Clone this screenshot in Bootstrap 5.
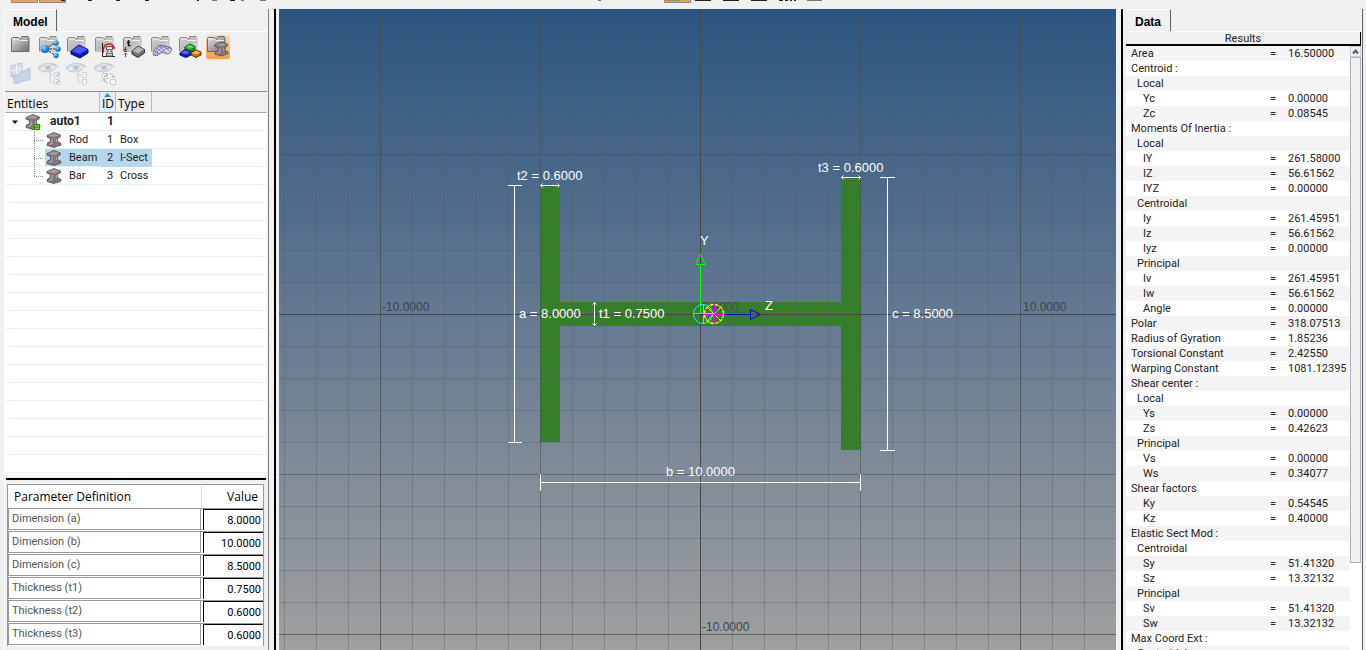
<!DOCTYPE html>
<html lang="en">
<head>
<meta charset="utf-8">
<meta name="viewport" content="width=device-width, initial-scale=1">
<title>Section properties</title>
<link href="https://cdn.jsdelivr.net/npm/bootstrap@5.3.0/dist/css/bootstrap.min.css" rel="stylesheet">
<style>
body{background:#f0f0f0;color:#222;font:11px/15px "Roboto","Liberation Sans",sans-serif}
.strip{height:9px}
.strip svg{display:block}
.side-l{width:279px;padding:0 3px 0 4px}
.side-l-in{width:266px;border-right:1px solid #808080;border-left:1px solid #fff}
.rule-l{border-right:2px solid #000;width:7px}
.side-r{width:250px;padding-left:5px}
.side-r-in{border-left:2px solid #000;border-right:1px solid #606060;margin-right:3px;padding:0 1px 0 3px}
.tabx{font:bold 12px/20px "Liberation Sans",sans-serif;color:#000;background:#f0f0f0;border:0;border-top:1px solid #fff;border-right:1px solid #606060;padding:2px 8px 0 8px;height:22px;display:block}
.tabx.wide{padding:2px 9px 0 9px}
.topline{border-top:1px solid #fff}
.tools{padding:3px 30px 5px 5px;gap:3px 4px}
.tools button{width:24px;height:24px;padding:0;border:0;background:none;display:block}
.tools button.on{background:linear-gradient(#f6dcc0,#f0a040);border-radius:2px}
.tools svg{display:block}
.tree{border-top:1px solid #8c8c8c;background:#fff repeating-linear-gradient(#fff 0 17px,#e4f3f8 17px 18px) 0 21px;margin-right:1px}
.tree table{border-collapse:separate;border-spacing:0;table-layout:fixed;width:100%}
.tree th{font:12px/20px "Open Sans",sans-serif;color:#000;background:#f0f0f0;height:21px;padding:0 0 0 2px;border-right:1px solid #b4c0c8;border-bottom:1px solid #a0acb4;white-space:nowrap;position:relative}
.tree th>span{position:relative;top:2px}
.tree th:last-child{border-right:0}
.tree th.sorted{background:#dceef8}
.tree th.sorted svg{position:absolute;left:4px;top:1px}
.tree td{height:18px;padding:0 0 1px;line-height:17px;white-space:nowrap}
.tree .fw-bold{font-size:12px}
.tree td.idc{padding-left:7px}
.tree td.tyc{padding-left:4px}
.tree .kid{padding-left:40px}
.tree .kid>div{height:17px;padding-left:1px}
.tree .sel>div,.tree .selc{background:#b5d7ea}
.guide{position:absolute;left:28px;top:39px}
.split{height:2px;background:#000;margin:1px 2px 4px 1px}
.params{margin:0 4px 4px 2px;border:1px solid #999;border-bottom:0;background:#fff}
.params table{width:100%;border-collapse:separate;border-spacing:0 1px}
.params thead th{font:12px/20px "Open Sans",sans-serif;color:#000;height:21px;padding:1px 6px 0}
.params thead th+th{text-align:right;border-left:1px solid #ddd;padding-right:5px}
.params tbody th{font-weight:400;color:#555;height:22px;border:1px solid #999;padding:0 3px;line-height:20px}
.params tbody td{padding:0 0 0 2px;height:22px;border-top:1px solid #999}
.params input{width:100%;height:21px;border:0;border-top:1px solid #000;border-left:1px solid #000;background:#fff;text-align:right;color:#000;padding:0 2px;border-radius:0;display:block}
.view{background:linear-gradient(#2b5580,#667a92 49%,#9fa09f)}
.view svg{display:block;width:100%;height:100%}
.resh{height:14px;line-height:14px;border-bottom:2px solid #000;border-right:1px solid #000}
.res{width:100%;border-collapse:collapse;table-layout:fixed}
.res td,.res th{height:15px;padding:0;line-height:15px;font-weight:400;white-space:nowrap}
.res th{padding-left:5px}
.res .l1{padding-left:11px}
.res .l2{padding-left:17px}
.res tr:nth-child(odd){background:#f4f4f4}
.res tr:nth-child(even){background:#fff}
.sbar{width:11px;background:#fff}
.sbtn{height:11px;border:1px solid #c8d2da;background:#f0f0f0;padding:0;line-height:0}
.thumb{height:506px;border:1px solid #a9b6c2;background:#f0f0f0}
</style>
</head>
<body class="vh-100 overflow-hidden d-flex flex-column">
<svg width="0" height="0" class="position-absolute">
<defs>
<linearGradient id="fg" x1="0" y1="0" x2="1" y2="1"><stop offset="0" stop-color="#e8e8e8"/><stop offset=".5" stop-color="#a8a8a8"/><stop offset="1" stop-color="#6c6c6c"/></linearGradient>
<linearGradient id="fg2" x1="0" y1="0" x2="1" y2="1"><stop offset="0" stop-color="#d4d4d4"/><stop offset=".5" stop-color="#bcbcbc"/><stop offset="1" stop-color="#e8e8e8"/></linearGradient>
<radialGradient id="bl" cx=".35" cy=".3" r=".8"><stop offset="0" stop-color="#9fe0ff"/><stop offset=".5" stop-color="#2890e0"/><stop offset="1" stop-color="#0850a0"/></radialGradient>
<symbol id="folder" viewBox="0 0 24 24"><path d="M1.500 16.500V3.500L2.500 2.500H8.500L10.500 4.500L12 1.500H18L19 3V16.500Z" fill="url(#fg)" stroke="#6a6a6a"/><path d="M2.500 4H8l2 1.500H18" fill="none" stroke="#eee"/></symbol>
<symbol id="folder2" viewBox="0 0 24 24"><path d="M1.500 16.500V3.500L2.500 2.500H8.500L10.500 4.500L12 1.500H18L19 3V16.500Z" fill="url(#fg2)" stroke="#c0c0c0"/><path d="M1.500 16V3.500L2.500 2.500H8.500L10.500 4.500L12 1.500H18" fill="none" stroke="#888"/><path d="M2.500 4H8l2 1.500H18" fill="none" stroke="#f4f4f4"/></symbol>
<symbol id="beam" viewBox="0 0 16 16"><path d="M1 3.500L8 .5L14.500 3L14 5L11.500 6.500V9.500L15 11.500V13L8 15.500L1 13.500L1.500 11L4.500 9.500V6.500L1 5Z" fill="#81787a" stroke="#514a4c" stroke-width=".8"/><path d="M2 3.700L8 1.300L13.500 3.200L8 5Z" fill="#a59c9e"/><path d="M6 7V11.500L3 12.500M10.500 7V10" fill="none" stroke="#b8b0b2"/></symbol>
<symbol id="eye" viewBox="0 0 24 24"><path d="M0 6.500C4 0 16 0 20 5C15 2 6 3 0 6.500C5 11 13 11 17 6" fill="none" stroke="#c9d0d8" stroke-width="1.300"/><circle cx="10" cy="6" r="3.500" fill="#ccd8e6"/><circle cx="10" cy="5.500" r="1.500" fill="#b0b8c4"/></symbol>
</defs>
</svg>

<div class="strip flex-shrink-0 overflow-hidden">
<svg width="1366" height="9" aria-hidden="true"><g fill="#eba24c" stroke="#888"><path d="M11.500 -2V2.500H37.500V-2ZM39.500 -2V2.500H65.500V-2ZM664.500 -2V2.500H690.500V-2Z"/></g><path d="M61 0h4v1h-4zM88 0h4v1h-4zM116 0h4v1h-4zM145 0h4v1h-4zM197 0h2v1h-2zM230 0h5v1h-5zM695 0h16v1h-16zM723 0h16v1h-16zM751 0h16v1h-16zM779 0h4v1h-4zM785 0h3v1h-3zM790 0h2v1h-2zM794 0h2v1h-2z" fill="#222"/><path d="M212 0h5v1h-5zM241 0h3v1h-3zM260 0h6v1h-6zM598 0h3v1h-3zM807 0h15v1h-15z" fill="#777"/><path d="M667 0h12v1h-12z" fill="#986"/></svg>
</div>

<main class="d-flex flex-fill overflow-hidden">
<aside class="side-l d-flex flex-shrink-0">
<div class="side-l-in d-flex flex-column">
<div class="d-flex"><button class="tabx" type="button">Model</button></div>
<div class="topline"></div>
<nav class="tools d-flex flex-wrap" aria-label="Entity tools">
<button type="button" aria-label="Component"><svg width="24" height="24"><use href="#folder"/></svg></button>
<button type="button" aria-label="Connectors"><svg width="24" height="24"><use href="#folder2"/><path d="M7 14L17 8M7 14H18M7 14L17 20" stroke="#333" stroke-dasharray="3 1"/><circle cx="7" cy="14" r="4" fill="url(#bl)"/><circle cx="18" cy="8" r="2.700" fill="url(#bl)"/><circle cx="20" cy="14" r="2.700" fill="url(#bl)"/><circle cx="18" cy="20.500" r="2.700" fill="url(#bl)"/></svg></button>
<button type="button" aria-label="Material"><svg width="24" height="24"><use href="#folder2"/><path d="M5 16L13 10L22 14.500V18L14 23L5 19Z" fill="#1414b4" stroke="#080870"/><path d="M5.500 16L13 10.500L21.500 14.500L14 19Z" fill="#4a58f4"/></svg></button>
<button type="button" aria-label="Curve"><svg width="24" height="24"><use href="#folder2"/><path d="M8.500 8V21.500H21" fill="none" stroke="#222"/><path d="M9 18C9 11 11 9 15 9S20 11 20.500 14" fill="none" stroke="#e01010" stroke-width="1.600"/><path d="M12.500 11.500h6v3l-2 1.500l2 2v3h-6v-3l2-2l-2-1.500Z" fill="#ddd" stroke="#555"/><path d="M13 14.500h5M13 18.500h5" stroke="#777"/></svg></button>
<button type="button" aria-label="Thickness"><svg width="24" height="24"><use href="#folder2"/><path d="M6.500 5V10.500H8.500M5 7.500H8" fill="none" stroke="#111" stroke-width="1.300"/><path d="M3.500 12V15M2 14L3.500 15.500L5 14M2 16.500H5M3.500 22V18.500M2 19.500L3.500 18L5 19.500" fill="none" stroke="#b01818"/><path d="M10 16L16 11L22.500 14.500V18L16 22.500L10 19Z" fill="#707070" stroke="#333"/><path d="M10.500 16L16 11.500L22 14.500L16 18.500Z" fill="#b8b8b8"/></svg></button>
<button type="button" aria-label="Mesh"><svg width="24" height="24"><use href="#folder2"/><path d="M3 20C4 13 7 10 13 10.500L21 12.500C23 15 20 19 17 19L13 17.500C9 18 8 22 3 20Z" fill="#dcdcf0" stroke="#7070b0"/><path d="M4.500 16L10 19M6 13L13 17.500M9 11L17 18.500M13 10.500L20 16.500M17 11.500L22 14M7 21C7 15 10 12 17 11.500M5 20C5 14 9 11 13 11M11 18C13 14 17 13 21 13" fill="none" stroke="#6868a8" stroke-width=".8"/></svg></button>
<button type="button" aria-label="Assembly"><svg width="24" height="24"><use href="#folder2"/><path d="M7 12L12 9L17 11.500V15L12 17.500L7 15Z" fill="#189018" stroke="#075007"/><path d="M7.500 12L12 9.500L16.500 12L12 14Z" fill="#50e050"/><path d="M2 18L7 14.500L13 17V20L8 22.500L2 20Z" fill="#1818b0" stroke="#080860"/><path d="M2.500 18L7 15L12.500 17.500L8 19.500Z" fill="#5060f4"/><path d="M13 18L18 15L23 17V20L18 22.500L13 20Z" fill="#c07010" stroke="#603000"/><path d="M13.500 18L18 15.500L22.500 17.500L18 19.500Z" fill="#ffb850"/></svg></button>
<button type="button" class="on" aria-label="Beam section"><svg width="24" height="24"><use href="#folder"/><use href="#beam" x="8" y="6" width="15" height="16"/></svg></button>
<button type="button" aria-label="Blocks" disabled><svg width="24" height="24"><path d="M1 4L12 1V11L1 15Z" fill="#d8dce6" stroke="#c0c4d0"/><path d="M6.500 2.500V13M1 9.500L12 6" stroke="#f4f4f8"/><path d="M3 13C8 15 13 8 20 6V18C14 17 9 23 4 21Z" fill="#c6d2e6" stroke="#b8c4da"/></svg></button>
<button type="button" aria-label="Show all" disabled><svg width="24" height="24"><use href="#eye"/><path d="M12 10V20H15M12 13H15" fill="none" stroke="#ccc"/><path d="M16.500 10.500h5v5h-5zM16.500 17.500h5v5h-5z" fill="#f4f8ff" stroke="#d0d0d0"/><path d="M18 13l1 1l2-3M18 20l1 1l2-3" fill="none" stroke="#88a0d8"/></svg></button>
<button type="button" aria-label="Hide all" disabled><svg width="24" height="24"><use href="#eye"/><path d="M12 10V20H15M12 13H15" fill="none" stroke="#ccc"/><path d="M16.500 10.500h4v5h-4zM16.500 17.500h4v5h-4z" fill="#f4f4f4" stroke="#d0d0d0"/></svg></button>
<button type="button" aria-label="Reverse" disabled><svg width="24" height="24"><use href="#eye"/><path d="M8.500 11.500h5v5h-5zM16.500 17.500h5v5h-5z" fill="#f4f8ff" stroke="#ccc"/><path d="M10 14l1 1l2-3" fill="none" stroke="#88a0d8"/><path d="M15.500 11.500q4 0 4 4M18 14l1.500 2l1.500-2M14 21q-4 0-4-3M8.500 19l1.500-2l1.500 2" fill="none" stroke="#bbb"/></svg></button>
</nav>
<div class="tree position-relative flex-fill">
<table>
<colgroup><col style="width:95px"><col style="width:16px"><col style="width:36px"><col></colgroup>
<thead><tr><th><span>Entities</span></th><th class="sorted"><svg width="7" height="4"><path d="M0 4L3.500 0L7 4Z" fill="#4a86a8"/></svg><span>ID</span></th><th><span>Type</span></th><th></th></tr></thead>
<tbody>
<tr class="fw-bold"><td><div class="d-flex align-items-center"><svg width="45" height="17"><path d="M7 7.500H13L10 11Z" fill="#111"/><use href="#beam" x="20" y="1" width="16" height="16"/><path d="M29.500 11.500h5v5h-5z" fill="#70e020" stroke="#288010"/><path d="M30 14h4" stroke="#288010"/></svg>auto1</div></td><td class="idc">1</td><td></td><td></td></tr>
<tr><td class="kid"><div class="d-flex align-items-center"><svg width="23" height="16"><use href="#beam" width="16" height="16"/></svg>Rod</div></td><td class="idc">1</td><td class="tyc">Box</td><td></td></tr>
<tr><td class="kid sel"><div class="d-flex align-items-center"><svg width="23" height="16"><use href="#beam" width="16" height="16"/></svg>Beam</div></td><td class="idc selc">2</td><td class="tyc selc">I-Sect</td><td></td></tr>
<tr><td class="kid"><div class="d-flex align-items-center"><svg width="23" height="16"><use href="#beam" width="16" height="16"/></svg>Bar</div></td><td class="idc">3</td><td class="tyc">Cross</td><td></td></tr>
</tbody>
</table>
<svg class="guide" width="12" height="48"><path d="M1.500 0V46M1 9.500H11M1 27.500H11M1 45.500H11" stroke="#888" stroke-dasharray="1 1"/></svg>
</div>
<div class="split"></div>
<div class="params">
<table>
<colgroup><col><col style="width:62px"></colgroup>
<thead><tr><th>Parameter Definition</th><th>Value</th></tr></thead>
<tbody>
<tr><th><label for="pa">Dimension (a)</label></th><td><input id="pa" value="8.0000"></td></tr>
<tr><th><label for="pb">Dimension (b)</label></th><td><input id="pb" value="10.0000"></td></tr>
<tr><th><label for="pc">Dimension (c)</label></th><td><input id="pc" value="8.5000"></td></tr>
<tr><th><label for="p1">Thickness (t1)</label></th><td><input id="p1" value="0.7500"></td></tr>
<tr><th><label for="p2">Thickness (t2)</label></th><td><input id="p2" value="0.6000"></td></tr>
<tr><th><label for="p3">Thickness (t3)</label></th><td><input id="p3" value="0.6000"></td></tr>
</tbody>
</table>
</div>
</div>
<div class="rule-l"></div>
</aside>

<section class="view flex-fill overflow-hidden" aria-label="Section view">
<svg viewBox="279 9 837 641" preserveAspectRatio="xMidYMid slice" font-family="Liberation Sans,sans-serif" font-size="13">
<path d="M540 186h20v116h281V178h20v272h-20V326H560V442h-20Z" fill="#367e2c"/>
<path d="M284.500 9V650M316.500 9V650M348.500 9V650M412.500 9V650M444.500 9V650M476.500 9V650M508.500 9V650M572.500 9V650M604.500 9V650M636.500 9V650M668.500 9V650M732.500 9V650M764.500 9V650M796.500 9V650M828.500 9V650M892.500 9V650M924.500 9V650M956.500 9V650M988.500 9V650M1052.500 9V650M1084.500 9V650M279 26.500H1116M279 58.500H1116M279 90.500H1116M279 122.500H1116M279 186.500H1116M279 218.500H1116M279 250.500H1116M279 282.500H1116M279 346.500H1116M279 378.500H1116M279 410.500H1116M279 442.500H1116M279 506.500H1116M279 538.500H1116M279 570.500H1116M279 602.500H1116" stroke="#505860" stroke-opacity=".35"/>
<path d="M540.500 9V650M860.500 9V650M279 154.500H1116M279 474.500H1116" stroke="#484848" stroke-opacity=".5"/>
<path d="M380.500 9V650M1020.500 9V650M279 634.500H1116" stroke="#484848" stroke-opacity=".7"/>
<path d="M700.500 9V650M279 314.500H1116" stroke="#4a4644"/>
<g fill="#3d4248" font-size="12"><text x="382" y="311">-10.0000</text><text x="1023" y="311">10.0000</text><text x="702" y="631">-10.0000</text><text x="702" y="311" fill="#40504a">0.0000</text></g>
<g stroke="#fff" fill="none"><path d="M508 185.500H522M508 442.500H522M514.500 186V442M880 177.500H895M880 450.500H895M887.500 178V450M540.500 474V491M860.500 474V491M541 482.500H860M540 185.500H560M841 177.500H861M594.500 302V326"/><path d="M542.500 183.500l-2 2l2 2M557.500 183.500l2 2l-2 2M843.500 175.500l-2 2l2 2M858.500 175.500l2 2l-2 2M592.500 304.500l2-2l2 2M592.500 323.500l2 2l2-2"/></g>
<g fill="#fff"><text x="517" y="180">t2 = 0.6000</text><text x="818" y="172">t3 = 0.6000</text><text x="519" y="318">a = 8.0000</text><text x="599" y="318">t1 = 0.7500</text><text x="892" y="318">c = 8.5000</text><text x="666" y="476">b = 10.0000</text><text x="700" y="245">Y</text><text x="765" y="310">Z</text></g>
<g fill="none"><path d="M700.500 314V264M695.500 264.500H705.500L700.500 254.500Z" stroke="#00ff00"/><path d="M701 314.500H750M750.500 309.500V319.500L760.500 314.500Z" stroke="#0000f0"/><circle cx="703" cy="314" r="9.500" stroke="#00ffff"/><path d="M693 313.500H713M703.500 304V324" stroke="#00ffff"/><circle cx="714" cy="314" r="9.500" stroke="#ffff00" stroke-width="1.300" stroke-dasharray="4 1"/><path d="M708 308L720 320M720 308L708 320" stroke="#ffff00" stroke-dasharray="4 1"/><path d="M703 314.500H725M714.500 304V324" stroke="#ff00ff"/><path d="M708 320L713 314.500M704 313.500H713" stroke="#00ffff"/></g>
</svg>
</section>

<aside class="side-r flex-shrink-0">
<div class="side-r-in h-100">
<div class="d-flex"><button class="tabx wide" type="button">Data</button></div>
<div class="topline"></div>
<div class="resh text-center">Results</div>
<div class="d-flex">
<table class="res align-self-start">
<colgroup><col><col style="width:18px"><col style="width:62px"></colgroup>
<tr><th>Area</th><td>=</td><td>16.50000</td></tr>
<tr><th colspan="3">Centroid :</th></tr>
<tr><th class="l1" colspan="3">Local</th></tr>
<tr><th class="l2">Yc</th><td>=</td><td>0.00000</td></tr>
<tr><th class="l2">Zc</th><td>=</td><td>0.08545</td></tr>
<tr><th colspan="3">Moments Of Inertia :</th></tr>
<tr><th class="l1" colspan="3">Local</th></tr>
<tr><th class="l2">IY</th><td>=</td><td>261.58000</td></tr>
<tr><th class="l2">IZ</th><td>=</td><td>56.61562</td></tr>
<tr><th class="l2">IYZ</th><td>=</td><td>0.00000</td></tr>
<tr><th class="l1" colspan="3">Centroidal</th></tr>
<tr><th class="l2">Iy</th><td>=</td><td>261.45951</td></tr>
<tr><th class="l2">Iz</th><td>=</td><td>56.61562</td></tr>
<tr><th class="l2">Iyz</th><td>=</td><td>0.00000</td></tr>
<tr><th class="l1" colspan="3">Principal</th></tr>
<tr><th class="l2">Iv</th><td>=</td><td>261.45951</td></tr>
<tr><th class="l2">Iw</th><td>=</td><td>56.61562</td></tr>
<tr><th class="l2">Angle</th><td>=</td><td>0.00000</td></tr>
<tr><th>Polar</th><td>=</td><td>318.07513</td></tr>
<tr><th>Radius of Gyration</th><td>=</td><td>1.85236</td></tr>
<tr><th>Torsional Constant</th><td>=</td><td>2.42550</td></tr>
<tr><th>Warping Constant</th><td>=</td><td>1081.12395</td></tr>
<tr><th colspan="3">Shear center :</th></tr>
<tr><th class="l1" colspan="3">Local</th></tr>
<tr><th class="l2">Ys</th><td>=</td><td>0.00000</td></tr>
<tr><th class="l2">Zs</th><td>=</td><td>0.42623</td></tr>
<tr><th class="l1" colspan="3">Principal</th></tr>
<tr><th class="l2">Vs</th><td>=</td><td>0.00000</td></tr>
<tr><th class="l2">Ws</th><td>=</td><td>0.34077</td></tr>
<tr><th colspan="3">Shear factors</th></tr>
<tr><th class="l2">Ky</th><td>=</td><td>0.54545</td></tr>
<tr><th class="l2">Kz</th><td>=</td><td>0.40000</td></tr>
<tr><th colspan="3">Elastic Sect Mod :</th></tr>
<tr><th class="l1" colspan="3">Centroidal</th></tr>
<tr><th class="l2">Sy</th><td>=</td><td>51.41320</td></tr>
<tr><th class="l2">Sz</th><td>=</td><td>13.32132</td></tr>
<tr><th class="l1" colspan="3">Principal</th></tr>
<tr><th class="l2">Sv</th><td>=</td><td>51.41320</td></tr>
<tr><th class="l2">Sw</th><td>=</td><td>13.32132</td></tr>
<tr><th colspan="3">Max Coord Ext :</th></tr>
<tr><th class="l1" colspan="3">Centroidal</th></tr>
</table>
<div class="sbar flex-shrink-0 d-flex flex-column">
<div class="sbtn"><svg width="9" height="9"><path d="M2 6.500L4.500 3.500L7 6.500" fill="none" stroke="#555" stroke-width="2"/></svg></div>
<div class="thumb"></div>
<div class="flex-fill"></div>
<div class="sbtn"><svg width="9" height="9"><path d="M2 2.500L4.500 5.500L7 2.500" fill="none" stroke="#555" stroke-width="2"/></svg></div>
</div>
</div>
</div>
</aside>
</main>
<script src="https://cdn.jsdelivr.net/npm/bootstrap@5.3.0/dist/js/bootstrap.bundle.min.js"></script>
</body>
</html>
